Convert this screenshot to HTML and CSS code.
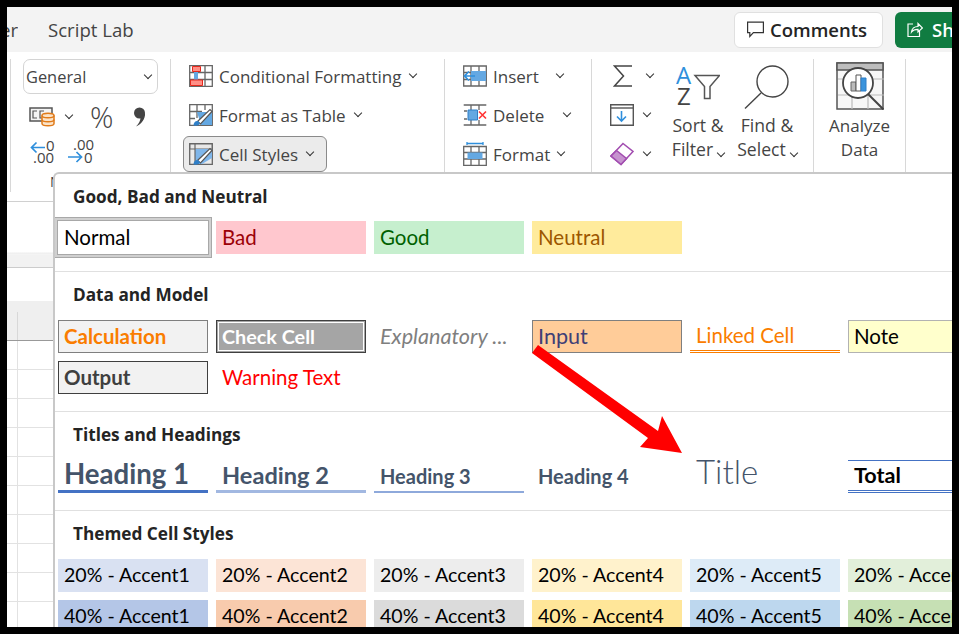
FILE: index.html
```html
<!DOCTYPE html>
<html lang="en">
<head>
	<meta charset="UTF-8">
	<title>Cell Styles</title>
	<link rel="stylesheet" href="styles.css">
</head>
<body>
<div class="frame">
<div class="window">

	<!--top bar-->
	<div class="topbar">
		<span class="tab tab-cut">er</span>
		<span class="tab">Script Lab</span>
		<button class="btn-comments">
			<svg width="17" height="17" viewBox="0 0 17 17" fill="none" stroke="#333" stroke-width="1.2"><path d="M.6 1.1h15.8v10.6H6.4l-3.6 3.8v-3.8H.6z"/></svg>
			Comments
		</button>
		<button class="btn-share">
			<svg width="16" height="17" viewBox="0 0 16 17" fill="none" stroke="#fff" stroke-width="1.2"><path d="M6 3H1v12.5h11.5V10"/><path d="M4.5 11c.5-4 3-5.500 6.500-5.500V2.500l4.500 4.500L11 11V8.300c-3 0-5 .7-6.500 2.700z"/></svg>
			Sh
		</button>
	</div>

	<!--ribbon-->
	<div class="ribbon">
		<div class="group group-number">
			<div class="select"><span>General</span><i class="chev"></i></div>
			<div class="num-row">
				<svg class="ic-currency" width="26" height="20" viewBox="0 0 26 20" fill="none">
					<path d="M1 1h22v13H1z" stroke="#555" stroke-width="1.500" fill="#f4f4f4"/>
					<path d="M8 4H4v7h4M15 4h-4v7h3" stroke="#555" stroke-width="1.200"/>
					<path d="M13 8.500c0-3 12-3 12 0v8c0 3-12 3-12 0z" fill="#fbe3c8" stroke="#e07b1a" stroke-width="1.500"/>
					<path d="M13 8.500c0 3 12 3 12 0M13 12.500c0 3 12 3 12 0" stroke="#e07b1a" stroke-width="1.500"/>
				</svg>
				<i class="chev chev-cur"></i>
				<span class="percent">%</span>
				<svg class="ic-comma" width="14" height="20" viewBox="0 0 14 20"><circle cx="7.500" cy="6" r="5.500" fill="#444"/><path d="M13 6c.5 6-3.500 11-9 13.500 3-3 4.500-6 4.500-9z" fill="#444"/></svg>
			</div>
			<div class="num-row num-row-dec">
				<svg width="26" height="26" viewBox="0 0 26 26" class="ic-dec">
					<path d="M16 8.500H2.500M7.500 3.500l-5 5 5 5" fill="none" stroke="#2f8fdc" stroke-width="1.700"/>
					<text x="17" y="12" class="dec-text">0</text>
					<text x="4" y="24" class="dec-text">.00</text>
				</svg>
				<svg width="26" height="26" viewBox="0 0 26 26" class="ic-dec">
					<text x="5" y="11" class="dec-text">.00</text>
					<path d="M0 18h13.500M8.500 13l5 5-5 5" fill="none" stroke="#2f8fdc" stroke-width="1.700"/>
					<text x="16" y="24" class="dec-text">0</text>
				</svg>
			</div>
			<div class="group-label">Number</div>
		</div>

		<div class="group group-styles">
			<div class="row">
				<svg width="24" height="22" viewBox="0 0 24 22" class="row-ic">
					<path d="M.7.700h22.600v20.600H.7zM8 1v20M16 1v20M1 7.500h22M1 14.500h22" fill="none" stroke="#666" stroke-width="1.300"/>
					<path d="M5 6h4v10H5z" fill="#64a8e2"/>
					<path d="M3.500 1.500h8v5h-8zM1.500 15h12v5.500h-12z" fill="#ff8f86" stroke="#e5281c"/>
				</svg>
				<span>Conditional Formatting</span><i class="chev"></i>
			</div>
			<div class="row">
				<svg width="24" height="22" viewBox="0 0 24 22" class="row-ic">
					<path d="M.7.700h22.600v20.600H.7zM8 1v13M16 1v5M1 7.500h12M1 14.500h5" fill="none" stroke="#666" stroke-width="1.300"/>
					<path d="M8 8h15v13H12z" fill="#64a8e2"/>
					<path d="M8.500 17.500L21 5.500l2 2-11.500 12.500z" fill="#fff" stroke="#555" stroke-width="1.200"/>
					<path d="M4.500 21.500c0-3 2-5 4.500-4.500l2 2c0 2-3 3-6.500 2.500z" fill="#2f7fc8"/>
				</svg>
				<span>Format as Table</span><i class="chev"></i>
			</div>
			<div class="row row-active">
				<svg width="24" height="22" viewBox="0 0 24 22" class="row-ic">
					<path d="M.7.700h22.600v20.600H.7z" fill="none" stroke="#666" stroke-width="1.300"/>
					<path d="M1 1h22v5H1z" fill="#e8e8e8" stroke="#666"/>
					<path d="M6 6h17v9L13 21H6z" fill="#7fb6ea"/>
					<path d="M6 1v20" stroke="#666" stroke-width="1.200"/>
					<path d="M8.500 17.500L21 5.500l2 2-11.500 12.500z" fill="#fff" stroke="#555" stroke-width="1.200"/>
					<path d="M4.500 21.500c0-3 2-5 4.500-4.500l2 2c0 2-3 3-6.500 2.500z" fill="#2f7fc8"/>
				</svg>
				<span>Cell Styles</span><i class="chev"></i>
			</div>
		</div>

		<div class="group group-cells">
			<div class="row">
				<svg width="24" height="22" viewBox="0 0 24 22" class="row-ic">
					<path d="M.7 1h22.600v20H.7zM1 7.500h22M1 14.500h22M8 1v20M16 1v20" fill="none" stroke="#666" stroke-width="1.300"/>
					<path d="M8 6h15v10H8z" fill="#64a8e2"/>
					<path d="M12 11H1.500M6 6.500L1.500 11 6 15.500" fill="#fff" stroke="#2f8fdc" stroke-width="1.700"/>
				</svg>
				<span>Insert</span><i class="chev chev-insert"></i>
			</div>
			<div class="row">
				<svg width="24" height="22" viewBox="0 0 24 22" class="row-ic">
					<path d="M.7 1h22.600M.7 21h22.600M1 7h3M1 15h3M8 1v5M8 16v5M16 1v5M16 16v5" fill="none" stroke="#666" stroke-width="1.300"/>
					<path d="M5 6h9.500v10H5z" fill="#64a8e2" stroke="#2f7fc8"/>
					<path d="M16 7.500l7 7M23 7.500l-7 7" stroke="#f33" stroke-width="1.600"/>
				</svg>
				<span>Delete</span><i class="chev chev-delete"></i>
			</div>
			<div class="row">
				<svg width="24" height="24" viewBox="0 0 24 24" class="row-ic">
					<path d="M.7 4.500h22.600v19H.7zM1 10.500h22M1 17h22M8 5v18M16 5v18" fill="none" stroke="#666" stroke-width="1.300"/>
					<path d="M4.500 10.500h15v6.500h-15z" fill="#64a8e2"/>
					<path d="M4 1.500h16M4 0v3M20 0v3" stroke="#2f8fdc" stroke-width="1.300" fill="none"/>
				</svg>
				<span>Format</span><i class="chev chev-format"></i>
			</div>
		</div>

		<div class="group group-editing">
			<div class="edit-small">
				<div class="row">
					<svg width="20" height="22" viewBox="0 0 20 22" class="ic-sum" fill="none" stroke="#444" stroke-width="1.500"><path d="M19 1H1.500L10.500 11 1.500 21H19"/></svg>
					<i class="chev"></i>
				</div>
				<div class="row">
					<svg width="24" height="22" viewBox="0 0 24 22" class="ic-fill" fill="none">
						<path d="M.7.700h22.600v20.600H.7z" stroke="#555" stroke-width="1.400"/>
						<path d="M1 4h22" stroke="#555" stroke-width="1.400"/>
						<path d="M11.500 7v10M7 12.500l4.500 4.500 4.500-4.500" stroke="#2f8fdc" stroke-width="1.600"/>
					</svg>
					<i class="chev"></i>
				</div>
				<div class="row">
					<svg width="24" height="24" viewBox="0 0 24 24" class="ic-fill">
						<path d="M13 1.500L23 9.500 11 22.500 1 14z" fill="#fff" stroke="#a24db0" stroke-width="1.600"/>
						<path d="M6.500 8.500L16.500 16.500 11 22.500 1 14z" fill="#c693cf" stroke="#a24db0" stroke-width="1.600"/>
					</svg>
					<i class="chev"></i>
				</div>
			</div>
			<div class="big big-sort">
				<svg width="44" height="42" viewBox="0 0 44 42" fill="none">
					<text x="0" y="19" class="az az-a">A</text>
					<text x="1" y="40" class="az">Z</text>
					<path d="M19 10.500h24.500l-9.500 11v12h-5.500v-12z" stroke="#555" stroke-width="1.500"/>
				</svg>
				<div class="big-text">Sort &amp;<br>Filter<i class="chev"></i></div>
			</div>
			<div class="big big-find">
				<svg width="46" height="44" viewBox="0 0 46 44" fill="none" stroke="#444" stroke-width="1.400">
					<circle cx="28.500" cy="16.500" r="15.500"/>
					<path d="M17 28L1 43.500"/>
				</svg>
				<div class="big-text">Find &amp;<br>Select<i class="chev"></i></div>
			</div>
		</div>

		<div class="group group-analyze">
			<svg width="48" height="48" viewBox="0 0 48 48" fill="none">
				<path d="M1 1h46v46H1z" fill="#f7f7f7" stroke="#555" stroke-width="1.500"/>
				<path d="M1 1h46v7H1z" fill="#bdbdbd" stroke="#555" stroke-width="1.500"/>
				<path d="M2 17h46M2 33h46M16 34v13M32 34v13" stroke="#bbb" stroke-width="1.200"/>
				<circle cx="22" cy="21" r="15" fill="#fff" stroke="#444" stroke-width="1.800"/>
				<path d="M15 20h5v9h-5z" fill="#bbb" stroke="#666"/>
				<path d="M20 13h5v16h-5z" fill="#fff" stroke="#555"/>
				<path d="M25 16h5v13h-5z" fill="#3b94dc" stroke="#2f7fc8"/>
				<path d="M32 32l15.500 15.500" stroke="#444" stroke-width="2"/>
			</svg>
			<div class="big-text">Analyze<br>Data</div>
		</div>
		<div class="group group-end"></div>
	</div>

	<!--sheet behind the dropdown-->
	<div class="formula-area"></div>
	<div class="sheet-gap"></div>
	<div class="sheet-head"></div>
	<div class="sheet-grid"></div>

	<!--cell styles dropdown-->
	<div class="panel">
		<div class="sec">
			<div class="sec-title">Good, Bad and Neutral</div>
			<div class="cells">
				<div class="cell normal">Normal</div>
				<div class="cell bad">Bad</div>
				<div class="cell good">Good</div>
				<div class="cell neutral">Neutral</div>
			</div>
		</div>
		<div class="sec sec-wide">
			<div class="sec-title">Data and Model</div>
			<div class="cells">
				<div class="cell calc">Calculation</div>
				<div class="cell check">Check Cell</div>
				<div class="cell expl">Explanatory ...</div>
				<div class="cell input">Input</div>
				<div class="cell linked">Linked Cell</div>
				<div class="cell note">Note</div>
				<div class="cell output">Output</div>
				<div class="cell warn">Warning Text</div>
			</div>
		</div>
		<div class="sec">
			<div class="sec-title">Titles and Headings</div>
			<div class="cells cells-head">
				<div class="cell h1">Heading 1</div>
				<div class="cell h2">Heading 2</div>
				<div class="cell h3">Heading 3</div>
				<div class="cell h4">Heading 4</div>
				<div class="cell title">Title</div>
				<div class="cell total">Total</div>
			</div>
		</div>
		<div class="sec sec-wide sec-last">
			<div class="sec-title">Themed Cell Styles</div>
			<div class="cells cells-theme">
				<div class="cell a1-20">20% - Accent1</div>
				<div class="cell a2-20">20% - Accent2</div>
				<div class="cell a3-20">20% - Accent3</div>
				<div class="cell a4-20">20% - Accent4</div>
				<div class="cell a5-20">20% - Accent5</div>
				<div class="cell a6-20">20% - Accent6</div>
				<div class="cell a1-40">40% - Accent1</div>
				<div class="cell a2-40">40% - Accent2</div>
				<div class="cell a3-40">40% - Accent3</div>
				<div class="cell a4-40">40% - Accent4</div>
				<div class="cell a5-40">40% - Accent5</div>
				<div class="cell a6-40">40% - Accent6</div>
			</div>
		</div>
	</div>

	<!--red arrow laid over the screenshot-->
	<svg class="arrow" width="160" height="120" viewBox="0 0 160 120">
		<path d="M8 0L128 86 132 71 152 108 110 102 118 93 2 8z" fill="#f00"/>
	</svg>
</div>
</div>
</body>
</html>
```

FILE: styles.css
```css
*{
	margin:0px;
	padding:0px;
	box-sizing:border-box;
}

body{
	background:#000;
	font-family:"Open Sans","Noto Sans",sans-serif;
	color:#333;
}

.frame{
	width:959px;
	height:634px;
	padding:7px;
	background:#000;
}

.window{
	position:relative;
	width:945px;
	height:620px;
	overflow:hidden;
	background:#fff;
}

/* top bar */
.topbar{
	display:flex;
	align-items:center;
	height:45px;
	background:#f3f3f3;
}

.tab{
	font-size:18.6px;
	margin-left:30px;
	color:#444;
	white-space:nowrap;
}

.tab-cut{
	width:11px;
	margin-left:0;
	overflow:hidden;
	direction:rtl;
}

.btn-comments,
.btn-share{
	display:flex;
	align-items:center;
	height:36px;
	border-radius:6px;
	font-family:inherit;
	font-size:18.5px;
	font-weight:600;
}

.btn-comments{
	width:149px;
	margin-left:auto;
	padding-left:12px;
	gap:6px;
	background:#fff;
	border:1px solid #e0e0e0;
	color:#242424;
}

.btn-share{
	flex:none;
	width:80px;
	margin-left:12px;
	margin-right:-23px;
	padding-left:12px;
	gap:9px;
	background:#107c41;
	border:none;
	color:#fff;
}

/* ribbon */
.ribbon{
	display:flex;
	height:150px;
	padding:7px 0 9px 3px;
	background:#fff;
	border-bottom:1px solid #d0d0d0;
}

.group{
	flex:none;
	border-left:1px solid #d8d8d8;
	font-size:17px;
	color:#444;
}

.group-number{
	width:160px;
	padding-left:12px;
}

.group-styles{
	width:274px;
	padding-left:12px;
}

.group-cells{
	width:147px;
	padding-left:18px;
}

.group-editing{
	display:flex;
	width:222px;
}

.group-analyze{
	display:flex;
	flex-direction:column;
	align-items:center;
	width:92px;
	padding-top:3px;
}

.group-end{
	width:1px;
}

.chev{
	display:inline-block;
	flex:none;
	width:6px;
	height:6px;
	margin-left:9px;
	margin-top:-4px;
	border-right:1.4px solid #333;
	border-bottom:1.4px solid #333;
	transform:rotate(45deg);
}

/* number group */
.select{
	display:flex;
	align-items:center;
	justify-content:space-between;
	width:135px;
	height:35px;
	padding:0 6px 0 2px;
	border:1px solid #d4d4d4;
	border-radius:7px;
	font-size:16.4px;
}

.num-row{
	display:flex;
	align-items:center;
	height:24px;
	margin-top:11px;
	padding-left:6px;
}

.chev-cur{
	margin-left:11px;
}

.percent{
	margin-left:18px;
	font-size:29px;
	font-weight:300;
	line-height:22px;
	color:#444;
}

.ic-comma{
	margin-left:19px;
}

.num-row-dec{
	height:26px;
	margin-top:10px;
	gap:13px;
}

.dec-text{
	font-size:15px;
	fill:#444;
}

.group-label{
	margin-top:7px;
	padding-left:27px;
	font-size:14px;
	line-height:20px;
}

/* stacked rows */
.row{
	display:flex;
	align-items:center;
	height:36px;
	margin-bottom:3px;
	padding-bottom:2px;
	white-space:nowrap;
}

.row-ic{
	flex:none;
	margin-right:6px;
}

.group-styles .row{
	padding-left:6px;
}

.row-active{
	width:144px;
	margin-top:-1px;
	background:#ebebeb;
	border:1px solid #8a8a8a;
	border-radius:6px;
}

.group-styles .row-active{
	padding-left:5px;
	padding-bottom:0;
}

.chev-insert{
	margin-left:18px;
}

.chev-delete{
	margin-left:20px;
}

.chev-format{
	margin-left:8px;
}

/* editing group */
.edit-small{
	flex:none;
	width:79px;
	padding-left:18px;
}

.ic-sum{
	flex:none;
	margin-left:3px;
	margin-right:5px;
}

.ic-fill{
	flex:none;
	margin-right:1px;
}

.big{
	flex:none;
	display:flex;
	flex-direction:column;
	align-items:center;
	padding-top:6px;
}

.big-sort{
	width:54px;
}

.big-find{
	width:84px;
}

.big-text{
	margin-top:4px;
	font-size:17px;
	line-height:24px;
	text-align:center;
	white-space:nowrap;
}

.big .big-text{
	font-size:17.6px;
}

.big-sort .big-text{
	margin-top:6px;
}

.big-find .big-text{
	margin-top:4px;
}

.big .chev{
	margin-left:5px;
}

.az{
	font-size:24px;
	fill:#444;
}

.az-a{
	fill:#2f8fdc;
}

/* sheet behind the dropdown */
.formula-area{
	height:53px;
	background:linear-gradient(#fff 50px,#eee 51px,#f6f6f6);
}

.sheet-gap{
	height:46px;
	background:linear-gradient(#f2f2f2 12px,#ccc 12px,#ccc 13px,#fff 13px);
}

.sheet-head{
	height:40px;
	background:linear-gradient(#d8d8d8,#d8d8d8) 10px 11px/1px 28px no-repeat,linear-gradient(#efefef,#efefef) 0 0/100% 39px no-repeat,#999;
}

.sheet-grid{
	height:300px;
	background:
		linear-gradient(#e2e2e2,#e2e2e2) 10px 0/1px 100% no-repeat,
		repeating-linear-gradient(#fff 0,#fff 28px,#e2e2e2 28px,#e2e2e2 29px);
}

/* dropdown panel */
.panel{
	position:absolute;
	left:46px;
	top:165px;
	width:920px;
	height:470px;
	padding-top:2px;
	background:#fff;
	border-left:2px solid #c8c8c8;
	border-top:2px solid #c8c8c8;
	border-top-left-radius:6px;
	overflow:hidden;
}

.sec{
	padding:10px 0 17px;
	border-bottom:1px solid #e0e0e0;
	margin-top:-2px;
}

.sec + .sec{
	margin-top:0;
}

.sec-last{
	border-bottom:none;
}

.sec-title{
	height:24px;
	margin-bottom:13px;
	padding-left:18px;
	font-size:17.2px;
	font-weight:700;
	line-height:26px;
	color:#242424;
	white-space:nowrap;
}

.sec-wide .sec-title{
	margin-bottom:14px;
}

.cells{
	display:grid;
	grid-template-columns:repeat(6,150px);
	grid-auto-rows:33px;
	gap:8px;
	margin-left:3px;
}

.cells-head{
	grid-auto-rows:34px;
}

.cell{
	padding-left:6px;
	font-family:Lato,"Open Sans",sans-serif;
	font-size:20.5px;
	line-height:33px;
	color:#000;
	white-space:nowrap;
	overflow:hidden;
}

.cells-theme .cell{
	font-size:19.6px;
	line-height:31px;
}

.normal{
	overflow:visible;
	box-shadow:0 0 0 1px #a8a8a8,0 0 0 3px #d0d0d0,0 0 0 4px #a8a8a8;
}

.bad{background:#ffc7ce;color:#9c0006;}
.good{background:#c6efce;color:#006100;}
.neutral{background:#ffeb9c;color:#9c5700;}

.calc{
	background:#f2f2f2;
	border:1px solid #7f7f7f;
	padding-left:5px;
	color:#fa7d00;
	font-weight:700;
	line-height:31px;
}

.check{
	background:#a5a5a5;
	border:1px solid #3f3f3f;
	outline:1px solid #fff;
	outline-offset:-3px;
	padding-left:5px;
	color:#fff;
	font-size:19.8px;
	font-weight:700;
	line-height:30px;
}

.expl{
	color:#7f7f7f;
	font-size:21.6px;
	font-style:italic;
}

.input{
	background:#fc9;
	border:1px solid #7f7f7f;
	padding-left:5px;
	color:#3f3f76;
	font-size:21.6px;
	line-height:30px;
}

.linked{
	border-bottom:3px double #fa7d00;
	color:#fa7d00;
	line-height:31px;
}

.note{
	background:#ffc;
	border:1px solid #b2b2b2;
	padding-left:5px;
	line-height:30px;
}

.output{
	background:#f2f2f2;
	border:1px solid #3f3f3f;
	padding-left:5px;
	color:#3f3f3f;
	font-weight:700;
	line-height:31px;
}

.warn{color:#f00;}

.h1,.h2,.h3,.h4{
	color:#44546a;
	font-weight:700;
}

.h1{
	border-bottom:3px solid #4472c4;
	font-size:27.6px;
	line-height:30px;
}

.h2{
	border-bottom:3px solid #a2b8e1;
	font-size:23.6px;
	line-height:32px;
}

.h3{
	border-bottom:2px solid #8ea9db;
	font-size:20px;
	line-height:34px;
}

.h4{
	font-size:20px;
	line-height:35px;
}

.title{
	color:#44546a;
	font-size:33px;
	font-weight:300;
	line-height:24px;
	overflow:visible;
}

.total{
	margin-top:1px;
	border-top:1px solid #4472c4;
	border-bottom:3px double #4472c4;
	font-size:21.6px;
	font-weight:700;
	line-height:29px;
}

.a1-20{background:#d9e1f2;}
.a2-20{background:#fce4d6;}
.a3-20{background:#ededed;}
.a4-20{background:#fff2cc;}
.a5-20{background:#ddebf7;}
.a6-20{background:#e2efda;}
.a1-40{background:#b4c6e7;}
.a2-40{background:#f8cbad;}
.a3-40{background:#dbdbdb;}
.a4-40{background:#ffe699;}
.a5-40{background:#bdd7ee;}
.a6-40{background:#c6e0b4;}

.arrow{
	position:absolute;
	left:523px;
	top:338px;
}
```
